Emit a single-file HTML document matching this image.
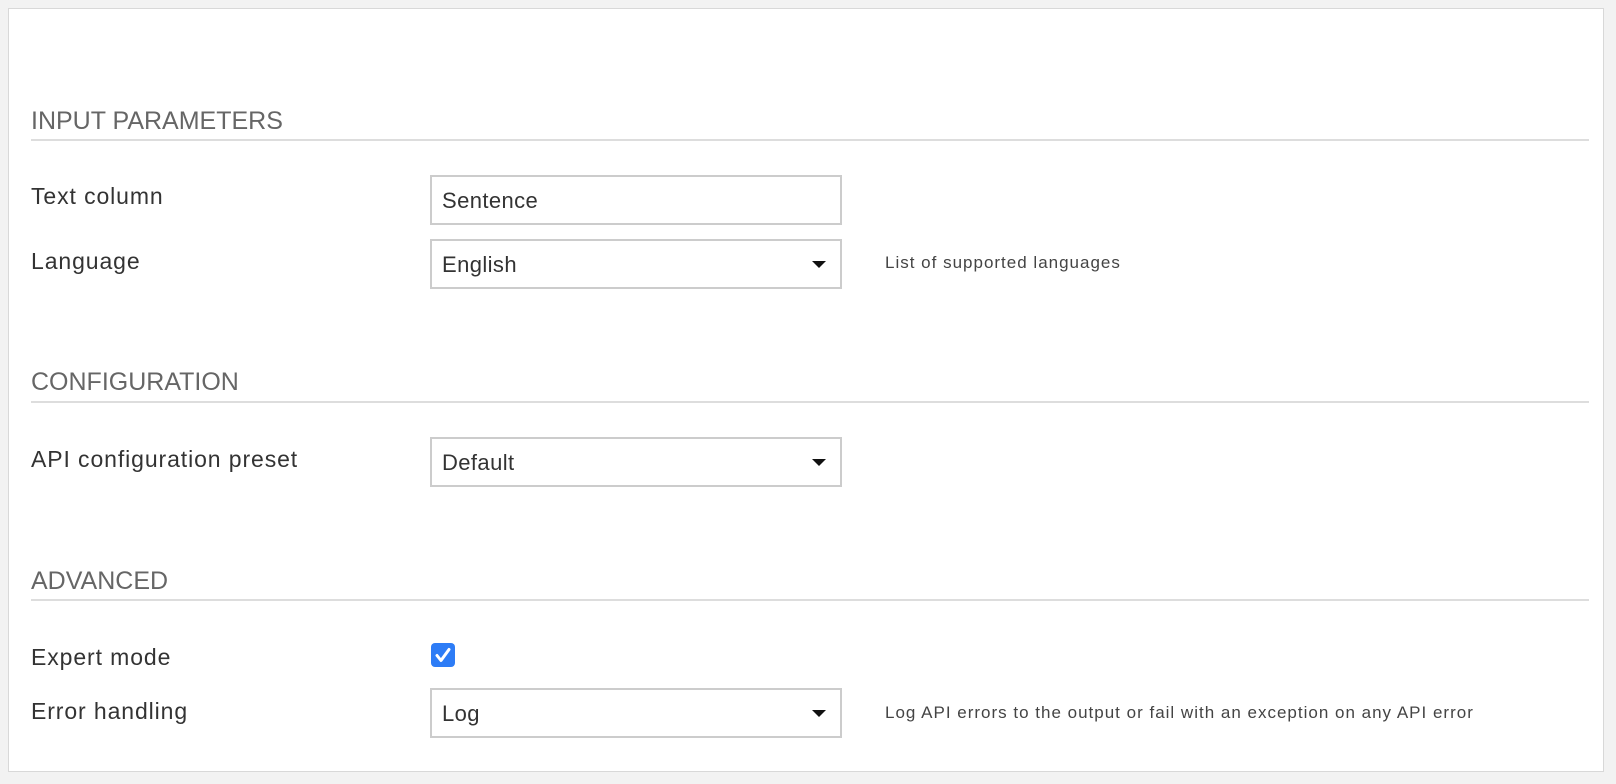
<!DOCTYPE html>
<html><head><meta charset="utf-8"><style>
html,body{margin:0;padding:0;width:1616px;height:784px;background:#f2f2f2;overflow:hidden;font-family:"Liberation Sans",sans-serif;}
.panel{position:absolute;left:8px;top:8px;width:1596px;height:764px;background:#fff;border:1px solid #d8d8d8;box-sizing:border-box;}
.h{position:absolute;left:31px;font-size:25px;color:#666;letter-spacing:0;}
.line{position:absolute;left:31px;width:1558px;height:2px;background:#ddd;}
.lbl{position:absolute;left:31px;font-size:23px;color:#333;letter-spacing:0.9px;}
.box{position:absolute;left:430px;width:412px;height:50px;border:2px solid #ccc;box-sizing:border-box;font-size:22px;color:#333;padding-left:10px;line-height:48px;letter-spacing:0.4px;}
.arr{position:absolute;right:14px;top:20px;width:0;height:0;border-left:7px solid transparent;border-right:7px solid transparent;border-top:7px solid #111;}
.help{position:absolute;left:885px;font-size:17px;color:#444;letter-spacing:1px;}
.cb{position:absolute;left:431px;top:643px;width:24px;height:24px;background:#2d7cf6;border-radius:4px;}
</style></head><body>
<div class="panel"></div>
<div class="h" style="top:107px">INPUT PARAMETERS</div>
<div class="line" style="top:139px"></div>
<div class="lbl" style="top:183px">Text column</div>
<div class="box" style="top:175px">Sentence</div>
<div class="lbl" style="top:248px">Language</div>
<div class="box" style="top:239px">English<div class="arr"></div></div>
<div class="help" style="top:253px">List of supported languages</div>
<div class="h" style="top:368px">CONFIGURATION</div>
<div class="line" style="top:401px"></div>
<div class="lbl" style="top:446px">API configuration preset</div>
<div class="box" style="top:437px">Default<div class="arr"></div></div>
<div class="h" style="top:567px">ADVANCED</div>
<div class="line" style="top:599px"></div>
<div class="lbl" style="top:644px">Expert mode</div>
<div class="cb"><svg width="24" height="24" viewBox="0 0 24 24"><path d="M6 12.5l4 5 8-11" stroke="#fff" stroke-width="3" fill="none" stroke-linecap="round" stroke-linejoin="round"/></svg></div>
<div class="lbl" style="top:698px">Error handling</div>
<div class="box" style="top:688px">Log<div class="arr"></div></div>
<div class="help" style="top:703px">Log API errors to the output or fail with an exception on any API error</div>
</body></html>
